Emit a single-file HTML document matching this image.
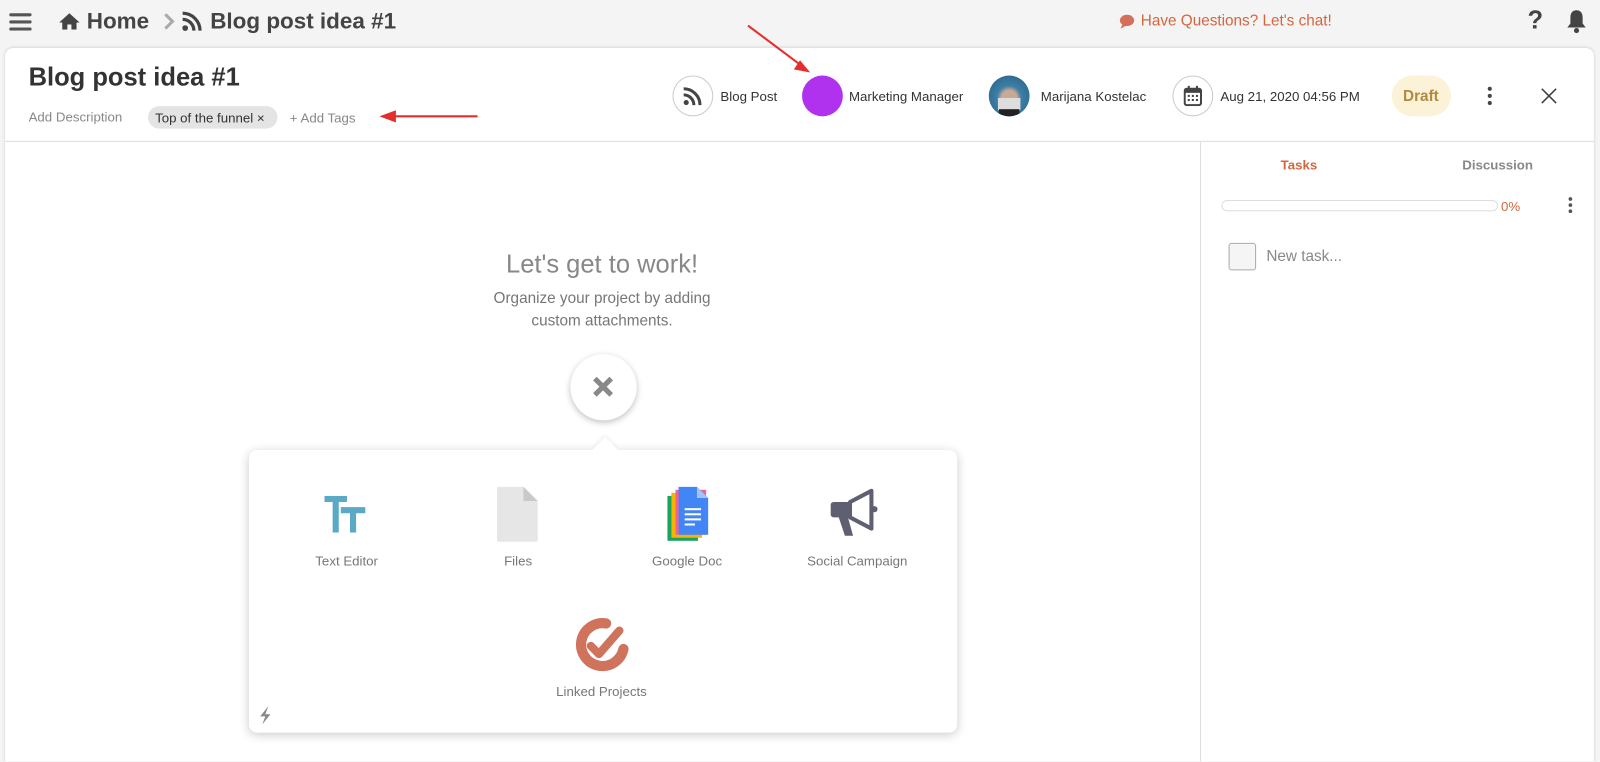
<!DOCTYPE html>
<html><head><meta charset="utf-8"><style>
*{box-sizing:border-box;margin:0;padding:0}
html,body{width:1600px;height:762px;overflow:hidden;background:#f4f4f4}
body{font-family:"Liberation Sans",sans-serif;color:#333;position:relative}
#w{position:absolute;left:0;top:0;width:1568px;height:746px;overflow:hidden;transform:scale(1.0204);transform-origin:0 0}
.abs{position:absolute}
.card{position:absolute;left:5px;top:47px;width:1557px;height:720px;background:#fff;border-radius:8px;box-shadow:0 0 3px rgba(0,0,0,.15)}
.t{position:absolute;white-space:nowrap}
.circ{position:absolute;width:40px;height:40px;border-radius:50%;border:1px solid #ccc;background:#fff}
</style></head><body><div id="w">
<svg class="abs" style="left:9px;top:12px" width="22" height="18"><rect y="1" width="22" height="3" rx="1.5" fill="#555"/><rect y="8" width="22" height="3" rx="1.5" fill="#555"/><rect y="15" width="22" height="3" rx="1.5" fill="#555"/></svg>
<svg class="abs" style="left:58px;top:12px" width="20" height="17"><path d="M10 1L0 10h3v7h5v-5h4v5h5v-7h3z" fill="#444"/></svg>
<div class="t" style="left:85px;top:8px;font-size:22px;font-weight:bold;color:#444">Home</div>
<svg class="abs" style="left:160px;top:13px" width="12" height="16"><path d="M2 1l7 7-7 7" stroke="#aaa" stroke-width="3" fill="none"/></svg>
<svg class="abs" style="left:178px;top:11px" width="20" height="20"><circle cx="3.5" cy="16.5" r="2.8" fill="#444"/><path d="M1 8a11 11 0 0 1 11 11M1 2a17 17 0 0 1 17 17" stroke="#444" stroke-width="3.2" fill="none"/></svg>
<div class="t" style="left:206px;top:8px;font-size:22px;font-weight:bold;color:#444">Blog post idea #1</div>
<svg class="abs" style="left:1097px;top:14px" width="15" height="14"><ellipse cx="7.5" cy="6" rx="7" ry="5.5" fill="#d4705a"/><path d="M3 10l-2 4 6-3z" fill="#d4705a"/></svg>
<div class="t" style="left:1118px;top:12px;font-size:15px;color:#d4663f">Have Questions? Let's chat!</div>
<div class="t" style="left:1497px;top:6px;font-size:25px;font-weight:bold;color:#444">?</div>
<svg class="abs" style="left:1535px;top:9px" width="20" height="24"><path d="M10 1c-4 0-6 3-6 7v6l-3 4h18l-3-4V8c0-4-2-7-6-7z" fill="#444"/><circle cx="10" cy="21" r="2.5" fill="#444"/></svg>
<div class="card"></div>
<div class="t" style="left:28px;top:62px;font-size:25px;font-weight:bold;color:#333">Blog post idea #1</div>
<div class="t" style="left:28px;top:107px;font-size:13px;color:#888">Add Description</div>
<div class="abs" style="left:145px;top:104px;width:127px;height:22px;border-radius:11px;background:#e4e4e4"></div>
<div class="t" style="left:152px;top:108px;font-size:13px;color:#333">Top of the funnel ×</div>
<div class="t" style="left:284px;top:108px;font-size:13px;color:#888">+ Add Tags</div>
<svg class="abs" style="left:0;top:0" width="1000" height="140"><line x1="468" y1="114" x2="385" y2="114" stroke="#e52d2d" stroke-width="2"/><path d="M372 114l16-6v12z" fill="#e52d2d"/><line x1="733" y1="25" x2="785" y2="64" stroke="#e52d2d" stroke-width="2"/><path d="M794 71l-16-3 6-9z" fill="#e52d2d"/></svg>
<div class="circ" style="left:659px;top:74px"></div>
<svg class="abs" style="left:669px;top:84px" width="20" height="20"><circle cx="3.5" cy="16.5" r="2.5" fill="#444"/><path d="M1 9a10 10 0 0 1 10 10M1 3a16 16 0 0 1 16 16" stroke="#444" stroke-width="3" fill="none"/></svg>
<div class="t" style="left:706px;top:87px;font-size:13px;color:#333">Blog Post</div>
<div class="abs" style="left:786px;top:74px;width:40px;height:40px;border-radius:50%;background:#b132ee"></div>
<div class="t" style="left:832px;top:87px;font-size:13px;color:#333">Marketing Manager</div>
<div class="abs" style="left:969px;top:74px;width:40px;height:40px;border-radius:50%;background:radial-gradient(circle at 50% 55%,#c9a996 0 25%,#3d7fa6 40%,#255d7e 100%);overflow:hidden"><div style="position:absolute;left:9px;top:22px;width:22px;height:12px;background:#ddd"></div><div style="position:absolute;left:10px;top:33px;width:20px;height:8px;background:#222"></div></div>
<div class="t" style="left:1020px;top:87px;font-size:13px;color:#333">Marijana Kostelac</div>
<div class="circ" style="left:1149px;top:74px"></div>
<svg class="abs" style="left:1160px;top:84px" width="18" height="20"><rect x="1" y="3" width="16" height="16" rx="2" fill="none" stroke="#444" stroke-width="2"/><rect x="1" y="3" width="16" height="4" fill="#444"/><rect x="4" y="0" width="2" height="4" fill="#444"/><rect x="12" y="0" width="2" height="4" fill="#444"/><g fill="#444"><rect x="4" y="9" width="2" height="2"/><rect x="8" y="9" width="2" height="2"/><rect x="12" y="9" width="2" height="2"/><rect x="4" y="13" width="2" height="2"/><rect x="8" y="13" width="2" height="2"/><rect x="12" y="13" width="2" height="2"/></g></svg>
<div class="t" style="left:1196px;top:87px;font-size:13px;color:#333">Aug 21, 2020 04:56 PM</div>
<div class="abs" style="left:1364px;top:74px;width:58px;height:40px;border-radius:20px;background:#fbf2d8"></div>
<div class="t" style="left:1375px;top:86px;font-size:15px;font-weight:bold;color:#b28a3f">Draft</div>
<svg class="abs" style="left:1457px;top:84px" width="6" height="20"><circle cx="3" cy="3" r="2" fill="#444"/><circle cx="3" cy="10" r="2" fill="#444"/><circle cx="3" cy="17" r="2" fill="#444"/></svg>
<svg class="abs" style="left:1510px;top:86px" width="16" height="16"><path d="M1 1l14 14M15 1L1 15" stroke="#444" stroke-width="1.6"/></svg>
<div class="abs" style="left:5px;top:138px;width:1557px;height:1px;background:#ddd"></div>
<div class="abs" style="left:1176px;top:139px;width:1px;height:608px;background:#ddd"></div>
<div class="t" style="left:1255px;top:154px;font-size:13px;font-weight:bold;color:#d4663f">Tasks</div>
<div class="t" style="left:1433px;top:154px;font-size:13px;font-weight:bold;color:#888">Discussion</div>
<div class="abs" style="left:1197px;top:196px;width:271px;height:11px;border-radius:6px;border:1px solid #ddd"></div>
<div class="t" style="left:1471px;top:195px;font-size:13px;color:#d4663f">0%</div>
<svg class="abs" style="left:1536px;top:192px" width="6" height="18"><circle cx="3" cy="3" r="1.8" fill="#555"/><circle cx="3" cy="9" r="1.8" fill="#555"/><circle cx="3" cy="15" r="1.8" fill="#555"/></svg>
<div class="abs" style="left:1204px;top:238px;width:27px;height:27px;border:1px solid #aaa;border-radius:3px;background:#f5f5f5"></div>
<div class="t" style="left:1241px;top:243px;font-size:15px;color:#888">New task...</div>
<div class="t" style="left:0;width:1180px;text-align:center;top:245px;font-size:25px;color:#888">Let's get to work!</div>
<div class="t" style="left:0;width:1180px;text-align:center;top:282px;font-size:15px;color:#777;line-height:22px">Organize your project by adding<br>custom attachments.</div>
<div class="abs" style="left:559px;top:347px;width:65px;height:65px;border-radius:50%;background:#fff;box-shadow:0 2px 6px rgba(0,0,0,.25)"></div>
<svg class="abs" style="left:580px;top:368px" width="22" height="22"><path d="M3 3l16 16M19 3L3 19" stroke="#888" stroke-width="5"/></svg>
<div class="abs" style="left:244px;top:441px;width:694px;height:277px;background:#fff;border-radius:8px;box-shadow:0 2px 10px rgba(0,0,0,.2)"></div>
<div class="abs" style="left:584px;top:432px;width:18px;height:18px;background:#fff;transform:rotate(45deg);box-shadow:-2px -2px 3px rgba(0,0,0,.05)"></div>
<svg class="abs" style="left:318px;top:486px" width="44" height="36"><path d="M0 0h22v6h-8v30h-6V6H0z" fill="#5aaac6"/><path d="M16 11h24v6h-9v19h-6V17h-9z" fill="#5aaac6"/></svg>
<div class="t" style="left:309px;top:542px;font-size:13px;color:#777">Text Editor</div>
<svg class="abs" style="left:487px;top:477px" width="42" height="54"><path d="M2 0h24l14 14v38a2 2 0 0 1-2 2H2a2 2 0 0 1-2-2V2a2 2 0 0 1 2-2z" fill="#e6e6e6"/><path d="M26 0l14 14H26z" fill="#c9c9c9"/></svg>
<div class="t" style="left:494px;top:542px;font-size:13px;color:#777">Files</div>
<svg class="abs" style="left:654px;top:477px" width="42" height="54"><rect x="0" y="9" width="30" height="44" fill="#1aa260"/><rect x="4" y="6" width="30" height="44" fill="#f4b400"/><rect x="8" y="3" width="30" height="44" fill="#f06292"/><path d="M11 0h18l11 11v36H11z" fill="#4285f4"/><path d="M29 0l11 11H29z" fill="#a1c2fa"/><g fill="#fff"><rect x="17" y="21" width="16" height="2"/><rect x="17" y="26" width="16" height="2"/><rect x="17" y="31" width="16" height="2"/><rect x="17" y="36" width="10" height="2"/></g></svg>
<div class="t" style="left:639px;top:542px;font-size:13px;color:#777">Google Doc</div>
<svg class="abs" style="left:814px;top:479px" width="54" height="48"><path d="M3 13h17v15h-3l5 18h-8L8 28H3a3 3 0 0 1-3-3V16a3 3 0 0 1 3-3z" fill="#5e5f70"/><path d="M19 13L40 2v37L19 28z" fill="#fff" stroke="#5e5f70" stroke-width="4" stroke-linejoin="round"/><circle cx="43" cy="20" r="3" fill="#5e5f70"/></svg>
<div class="t" style="left:791px;top:542px;font-size:13px;color:#777">Social Campaign</div>
<svg class="abs" style="left:564px;top:605px" width="54" height="54"><path d="M30 6A21 21 0 1 0 47 31" stroke="#d0735c" stroke-width="10" fill="none" stroke-linecap="round"/><path d="M15 28l8 8 20-23" stroke="#d0735c" stroke-width="8" fill="none" stroke-linecap="round" stroke-linejoin="round"/></svg>
<div class="t" style="left:545px;top:670px;font-size:13px;color:#777">Linked Projects</div>
<svg class="abs" style="left:254px;top:692px" width="14" height="18"><path d="M9 0L1 10h5l-3 8 8-10H6z" fill="#888"/></svg>
</div></body></html>
